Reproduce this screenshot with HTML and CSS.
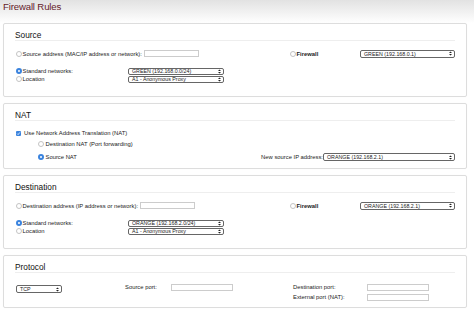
FILE: index.html
```html
<!DOCTYPE html>
<html>
<head>
    <title>Firewall Rules</title>
    <link rel="stylesheet" href="styles.css">
</head>
<body>
    <div class="page-header">
        <h1>Firewall Rules</h1>
    </div>

    <div class="box">
        <h3>Source</h3>
        <div class="addr-row">
            <label class="opt addr-opt"><input type="radio" name="src"> Source address (MAC/IP address or network): <input type="text" class="field"></label>
            <label class="opt fw-opt"><input type="radio" name="src"> <b>Firewall</b></label>
            <div class="select wide">GREEN (192.168.0.1)<span class="arrows"><svg width="3" height="5" viewBox="0 0 3 5"><path d="M0 2L1.5 0.4L3 2Z M0 3L1.5 4.6L3 3Z" fill="#222"/></svg></span></div>
        </div>
        <div class="net-grid">
            <label class="opt"><input type="radio" name="src" checked> Standard networks:</label>
            <div class="select">GREEN (192.168.0.0/24)<span class="arrows"><svg width="3" height="5" viewBox="0 0 3 5"><path d="M0 2L1.5 0.4L3 2Z M0 3L1.5 4.6L3 3Z" fill="#222"/></svg></span></div>
            <label class="opt"><input type="radio" name="src"> Location</label>
            <div class="select">A1 - Anonymous Proxy<span class="arrows"><svg width="3" height="5" viewBox="0 0 3 5"><path d="M0 2L1.5 0.4L3 2Z M0 3L1.5 4.6L3 3Z" fill="#222"/></svg></span></div>
        </div>
    </div>

    <div class="box nat-box">
        <h3>NAT</h3>
        <label class="opt nat-check"><span class="check"><svg width="5" height="5" viewBox="0 0 5 5"><path d="M1.1 2.6L2.1 3.6L3.9 1.4" stroke="#fff" stroke-width="0.8" fill="none"/></svg></span> Use Network Address Translation (NAT)</label>
        <label class="opt nat-sub nat-dnat"><input type="radio" name="nat"> Destination NAT (Port forwarding)</label>
        <div class="nat-snat">
            <label class="opt nat-sub"><input type="radio" name="nat" checked> Source NAT</label>
            <span class="snat-label">New source IP address:</span>
            <div class="select snat-select">ORANGE (192.168.2.1)<span class="arrows"><svg width="3" height="5" viewBox="0 0 3 5"><path d="M0 2L1.5 0.4L3 2Z M0 3L1.5 4.6L3 3Z" fill="#222"/></svg></span></div>
        </div>
    </div>

    <div class="box">
        <h3>Destination</h3>
        <div class="addr-row">
            <label class="opt addr-opt"><input type="radio" name="dst"> Destination address (IP address or network): <input type="text" class="field"></label>
            <label class="opt fw-opt"><input type="radio" name="dst"> <b>Firewall</b></label>
            <div class="select wide">ORANGE (192.168.2.1)<span class="arrows"><svg width="3" height="5" viewBox="0 0 3 5"><path d="M0 2L1.5 0.4L3 2Z M0 3L1.5 4.6L3 3Z" fill="#222"/></svg></span></div>
        </div>
        <div class="net-grid">
            <label class="opt"><input type="radio" name="dst" checked> Standard networks:</label>
            <div class="select">ORANGE (192.168.2.0/24)<span class="arrows"><svg width="3" height="5" viewBox="0 0 3 5"><path d="M0 2L1.5 0.4L3 2Z M0 3L1.5 4.6L3 3Z" fill="#222"/></svg></span></div>
            <label class="opt"><input type="radio" name="dst"> Location</label>
            <div class="select">A1 - Anonymous Proxy<span class="arrows"><svg width="3" height="5" viewBox="0 0 3 5"><path d="M0 2L1.5 0.4L3 2Z M0 3L1.5 4.6L3 3Z" fill="#222"/></svg></span></div>
        </div>
    </div>

    <div class="box proto-box">
        <h3>Protocol</h3>
        <div class="proto-grid">
            <div class="select tcp">TCP<span class="arrows"><svg width="3" height="5" viewBox="0 0 3 5"><path d="M0 2L1.5 0.4L3 2Z M0 3L1.5 4.6L3 3Z" fill="#222"/></svg></span></div>
            <span class="plabel src-port">Source port:</span>
            <input type="text" class="field port src-port-in">
            <span class="plabel dst-port">Destination port:</span>
            <input type="text" class="field port dst-port-in">
            <span class="plabel ext-port">External port (NAT):</span>
            <input type="text" class="field port ext-port-in">
        </div>
    </div>
</body>
</html>
```

FILE: styles.css
```css
body {
    margin: 0;
    font-family: 'Liberation Sans', Arial, sans-serif;
    font-size: 5.85px;
    color: #222;
    background-color: #fff;
}
.page-header {
    height: 23px;
    padding: 0 3px;
    box-sizing: border-box;
    background: linear-gradient(#e2e2e2, #fff);
}
.page-header h1 {
    margin: 0;
    font-size: 9.6px;
    line-height: 14px;
    font-weight: normal;
    color: #641a29;
    letter-spacing: -0.15px;
}
.box {
    margin: 0 7px 6px 3px;
    border: 1px solid #ddd;
    border-radius: 2px;
    padding: 6px 11px 13px;
    box-shadow: 0 0 1px rgba(0, 0, 0, 0.06);
}
.box h3 {
    margin: 0;
    font-size: 8.3px;
    line-height: 10px;
    font-weight: normal;
    color: #111;
    border-bottom: 1px solid #eee;
}
.opt {
    display: flex;
    align-items: center;
    white-space: nowrap;
    height: 7px;
}
.opt b {
    font-weight: bold;
}
input[type=radio] {
    appearance: none;
    -webkit-appearance: none;
    width: 6px;
    height: 6px;
    margin: 0 1px 0 0.5px;
    border: 0.6px solid #c4c4c4;
    border-radius: 50%;
    background-color: #fff;
    box-sizing: border-box;
    flex-shrink: 0;
}
input[type=radio]:checked {
    border: 2px solid #3a83de;
}
.check {
    display: inline-flex;
    width: 5px;
    height: 5px;
    margin: 0 3px 0 1px;
    border-radius: 1px;
    background-color: #3a83de;
}
.field {
    width: 55px;
    height: 7px;
    margin: 0 0 0 2px;
    padding: 0;
    border: 0.6px solid #ccc;
    box-sizing: border-box;
    background-color: #fff;
}
.select {
    display: flex;
    align-items: center;
    justify-content: space-between;
    height: 7.5px;
    padding: 0 2px 0 3px;
    box-sizing: border-box;
    border: 0.8px solid #666;
    border-radius: 2px;
    background-color: #fff;
    font-size: 5.3px;
    white-space: nowrap;
}
.arrows {
    display: flex;
}
.addr-row {
    display: flex;
    align-items: center;
    margin-top: 9px;
}
.addr-opt {
    width: 274px;
}
.fw-opt {
    width: 71px;
}
.select.wide {
    width: 95px;
}
.net-grid {
    display: grid;
    grid-template-columns: 113px 96px;
    row-gap: 0.5px;
    margin-top: 10px;
    align-items: center;
}
.nat-box {
    padding-bottom: 7px;
}
.nat-check {
    height: 8px;
    margin-top: 8px;
}
.nat-sub {
    height: 8px;
    padding-left: 22px;
}
.nat-sub input[type=radio] {
    margin-right: 2px;
}
.nat-dnat {
    margin-top: 3px;
}
.nat-snat {
    display: flex;
    align-items: center;
    margin-top: 5px;
}
.snat-label {
    margin-left: auto;
}
.snat-select {
    width: 132px;
}
.proto-box {
    padding-bottom: 6px;
}
.proto-grid {
    display: grid;
    grid-template-columns: 110px 46px 62px 60px 74px 62px;
    grid-template-rows: 8px 8px;
    row-gap: 2px;
    margin-top: 10px;
    align-items: center;
}
.select.tcp {
    grid-column: 1;
    grid-row: 1 / 3;
    align-self: start;
    width: 46px;
    height: 8px;
    margin: 2px 0 0 1px;
}
.src-port { grid-column: 2; grid-row: 1; }
.src-port-in { grid-column: 3; grid-row: 1; }
.dst-port { grid-column: 5; grid-row: 1; }
.dst-port-in { grid-column: 6; grid-row: 1; }
.ext-port { grid-column: 5; grid-row: 2; }
.ext-port-in { grid-column: 6; grid-row: 2; }
.field.port {
    width: 62px;
    margin: 0;
}
```
